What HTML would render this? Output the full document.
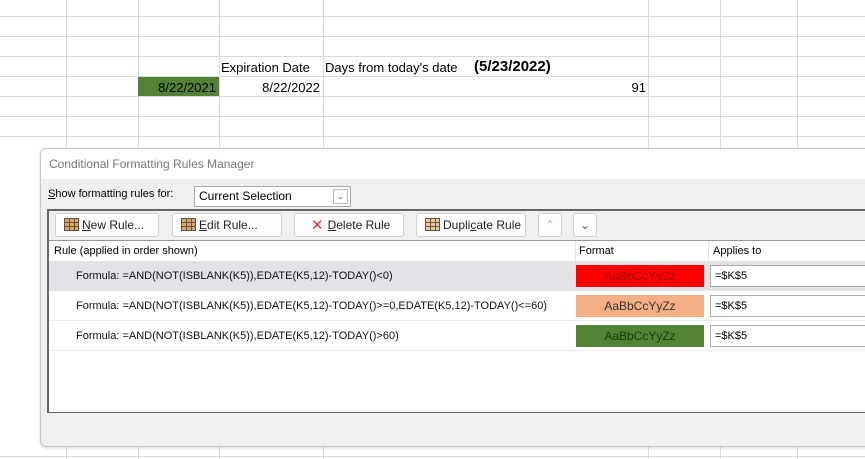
<!DOCTYPE html>
<html><head><style>
*{margin:0;padding:0;box-sizing:border-box}
body{width:865px;height:459px;overflow:hidden;background:#fff;position:relative;font-family:"Liberation Sans",sans-serif;font-size:12px;color:#000}
.a{position:absolute}
.v{position:absolute;top:0;width:1px;height:459px;background:#d9d9d9}
.h{position:absolute;left:0;height:1px;width:865px;background:#d9d9d9}
.btn{position:absolute;top:213px;height:24px;background:#fdfdfd;border:1px solid #d0d0d0;border-radius:3px;font-size:12px;line-height:22px;padding-left:8px;color:#222}
.ic{display:inline-block;width:15px;height:13px;vertical-align:-2px;margin-right:3px;border:1px solid #555;background:linear-gradient(#555,#555) 4px 0/1px 100% no-repeat,linear-gradient(#555,#555) 9px 0/1px 100% no-repeat,linear-gradient(#555,#555) 0 3px/100% 1px no-repeat,linear-gradient(#555,#555) 0 7px/100% 1px no-repeat,#e8a45a}
.row{position:absolute;left:49px;width:816px;height:30px;border-bottom:1px solid #ececec}
.ft{position:absolute;left:27px;top:9px;font-size:11px;color:#111}
.sw{position:absolute;left:527px;top:4px;width:128px;height:22px;text-align:center;line-height:22px;font-size:12px}
.ap{position:absolute;left:661px;top:4px;width:160px;height:22px;border:1px solid #aaa;background:#fff;font-size:11px;line-height:20px;padding-left:4px}
</style></head><body>
<div class="v" style="left:66px"></div><div class="v" style="left:138px"></div><div class="v" style="left:219px"></div><div class="v" style="left:323px"></div><div class="v" style="left:648px"></div><div class="v" style="left:720px"></div><div class="v" style="left:797px"></div>
<div class="h" style="top:16px"></div><div class="h" style="top:36px"></div><div class="h" style="top:56px"></div><div class="h" style="top:76px"></div><div class="h" style="top:96px"></div><div class="h" style="top:116px"></div><div class="h" style="top:136px"></div><div class="h" style="top:456px"></div>
<div class="a" style="left:138px;top:77px;width:81px;height:19px;background:#548235"></div>
<div class="a" style="left:221px;top:60px;font-size:13px">Expiration Date</div>
<div class="a" style="left:325px;top:60px;font-size:13px">Days from today's date</div>
<div class="a" style="left:474px;top:58px;font-size:15px;font-weight:bold">(5/23/2022)</div>
<div class="a" style="left:140px;top:80px;width:76px;text-align:right;font-size:13px">8/22/2021</div>
<div class="a" style="left:221px;top:80px;width:99px;text-align:right;font-size:13px">8/22/2022</div>
<div class="a" style="left:325px;top:80px;width:321px;text-align:right;font-size:13px">91</div>

<div class="a" style="left:40px;top:148px;width:840px;height:299px;background:#f0f0f0;border:1px solid #c8c8c8;border-radius:6px;box-shadow:0 1px 3px rgba(0,0,0,.15)"></div>
<div class="a" style="left:41px;top:149px;width:830px;height:30px;background:#fff;border-radius:6px 0 0 0"></div>
<div class="a" style="left:49px;top:157px;font-size:12px;color:#777">Conditional Formatting Rules Manager</div>
<div class="a" style="left:48px;top:188px;font-size:11px"><u>S</u>how formatting rules for:</div>
<div class="a" style="left:194px;top:186px;width:157px;height:21px;background:#fff;border:1px solid #aaa;font-size:12px;line-height:19px;padding-left:4px">Current Selection
<div class="a" style="right:2px;top:2px;width:15px;height:15px;border:1px solid #bbb;font-size:9px;line-height:13px;text-align:center;color:#666">&#8964;</div></div>
<div class="a" style="left:47px;top:209px;width:830px;height:204px;border:2px solid #666;border-right:none;background:#f0f0f0"></div>
<div class="btn" style="left:55px;width:104px"><span class="ic"></span><u>N</u>ew Rule...</div>
<div class="btn" style="left:172px;width:110px"><span class="ic"></span><u>E</u>dit Rule...</div>
<div class="btn" style="left:294px;width:110px;padding-left:16px"><span style="color:#d33;font-size:15px;vertical-align:-1px;margin-right:4px">&#10005;</span><u>D</u>elete Rule</div>
<div class="btn" style="left:416px;width:110px"><span class="ic" style="background-color:#f0c890"></span>Dupli<u>c</u>ate Rule</div>
<div class="btn" style="left:538px;width:24px;padding:0;text-align:center;color:#bbb">&#8963;</div>
<div class="btn" style="left:573px;width:24px;padding:0;text-align:center;color:#357">&#8964;</div>
<div class="a" style="left:49px;top:240px;width:816px;height:172px;background:#fff;border-top:1px solid #999"></div>
<div class="a" style="left:54px;top:245px;font-size:11px">Rule (applied in order shown)</div>
<div class="a" style="left:575px;top:241px;width:1px;height:20px;background:#e5e5e5"></div>
<div class="a" style="left:708px;top:241px;width:1px;height:20px;background:#e5e5e5"></div>
<div class="a" style="left:579px;top:245px;font-size:11px">Format</div>
<div class="a" style="left:713px;top:245px;font-size:11px">Applies to</div>
<div class="row" style="top:261px;background:#e1e1e6;border-bottom:none"><div class="ft">Formula: =AND(NOT(ISBLANK(K5)),EDATE(K5,12)-TODAY()&lt;0)</div><div class="sw" style="background:#ff0000;color:#9c0006">AaBbCcYyZz</div><div class="ap">=$K$5</div></div>
<div class="row" style="top:291px"><div class="ft">Formula: =AND(NOT(ISBLANK(K5)),EDATE(K5,12)-TODAY()&gt;=0,EDATE(K5,12)-TODAY()&lt;=60)</div><div class="sw" style="background:#f4b084;color:#333">AaBbCcYyZz</div><div class="ap">=$K$5</div></div>
<div class="row" style="top:321px"><div class="ft">Formula: =AND(NOT(ISBLANK(K5)),EDATE(K5,12)-TODAY()&gt;60)</div><div class="sw" style="background:#548235;color:#1e3a10">AaBbCcYyZz</div><div class="ap">=$K$5</div></div>
</body></html>
